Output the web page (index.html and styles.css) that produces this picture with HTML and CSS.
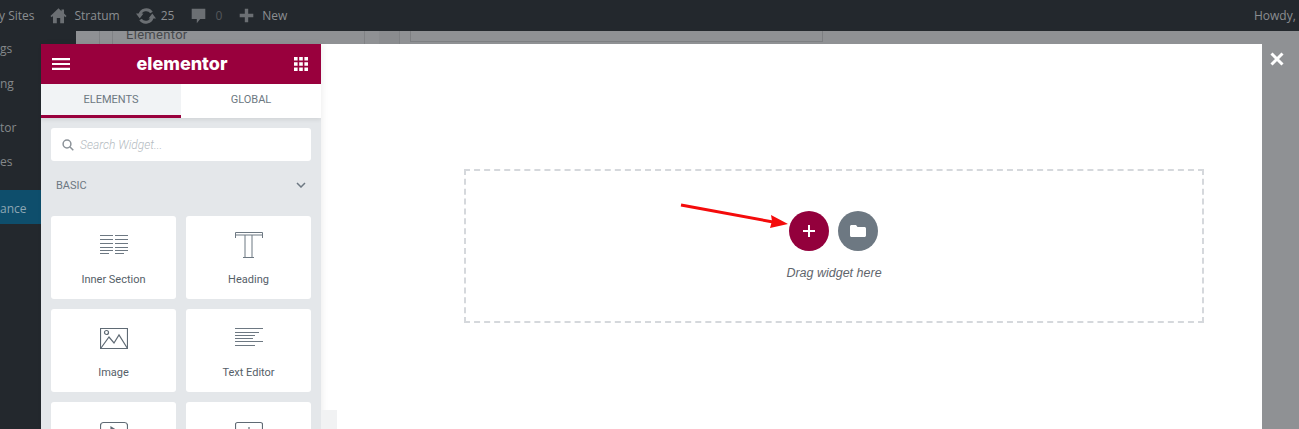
FILE: index.html
```html
<!DOCTYPE html>
<html lang="en">
<head>
  <meta charset="UTF-8" />
  <title>Elementor editor</title>
  <link rel="stylesheet" href="styles.css">
</head>
<body>

<div class="adminbar">
  <div class="bar-left">
    <span class="bar-item sites">y Sites</span>
    <span class="bar-item">
      <svg class="bar-icon" viewBox="0 0 20 20"><path d="M10 1.500 .5 10.500 2 12l1.500-1.300V19H8v-6h4v6h4.500v-8.300L18 12l1.500-1.500L16.500 7.700V3h-3v1.900z"/></svg>
      Stratum
    </span>
    <span class="bar-item tight">
      <svg class="bar-icon wide" viewBox="0 0 20 20"><path class="ring" d="M3.800 9A6.500 6.500 0 0 1 15.500 6.500M16.200 11A6.500 6.500 0 0 1 4.500 13.500"/><path d="M0 7.500h7.500L3.700 12.500zM20 12.500h-7.500l3.800-5z"/></svg>
      25
    </span>
    <span class="bar-item muted">
      <svg class="bar-icon" viewBox="0 0 20 20"><path d="M2 2h16v12h-6l-4 5v-5H2z"/></svg>
      0
    </span>
    <span class="bar-item">
      <svg class="bar-icon" viewBox="0 0 20 20"><path d="M8 2h4v6h6v4h-6v6H8v-6H2V8h6z"/></svg>
      New
    </span>
  </div>
  <span class="howdy">Howdy,</span>
</div>

<div class="stage">
  <div class="adminmenu">
    <div class="menu-item first">gs</div>
    <div class="menu-item second">ng</div>
    <div class="menu-item third">tor</div>
    <div class="menu-item fourth">es</div>
    <div class="menu-item current">ance</div>
  </div>

  <div class="backdrop">
    <div class="behind-title">Elementor</div>
    <span class="behind-line l1"></span>
    <span class="behind-line l2"></span>
    <span class="behind-line l3"></span>
    <span class="behind-line l4"></span>
    <span class="behind-line l5"></span>
    <span class="behind-box"></span>
  </div>

  <div class="editor">
    <div class="panel">
      <div class="panel-head">
        <svg class="head-icon" viewBox="0 0 18 12"><path d="M0 0h18v2.200H0zM0 4.900h18v2.200H0zM0 9.800h18V12H0z"/></svg>
        <span class="logo">elementor</span>
        <svg class="head-grid" viewBox="0 0 14 14"><path d="M0 0h3.600v3.600H0zM5.200 0h3.600v3.600H5.200zM10.400 0H14v3.600h-3.600zM0 5.200h3.600v3.600H0zM5.200 5.200h3.600v3.600H5.200zM10.400 5.200H14v3.600h-3.600zM0 10.400h3.600V14H0zM5.200 10.400h3.600V14H5.200zM10.400 10.400H14V14h-3.600z"/></svg>
      </div>

      <div class="tabs">
        <div class="tab active">ELEMENTS</div>
        <div class="tab">GLOBAL</div>
      </div>

      <div class="panel-body">
        <div class="search">
          <svg class="search-icon" viewBox="0 0 12 12"><circle cx="5" cy="5" r="3.900"/><path d="M8 8l3.300 3.300"/></svg>
          <span>Search Widget...</span>
        </div>

        <div class="group-title">
          <span>BASIC</span>
          <svg class="chevron" viewBox="0 0 10 6"><path d="M1 1l4 4 4-4"/></svg>
        </div>

        <div class="widgets">
          <div class="widget">
            <svg class="widget-icon" viewBox="0 0 28 28"><path d="M0 4.500h13M15 4.500h13M0 8.500h13M15 8.500h13M0 12.500h13M15 12.500h13M0 16.500h13M15 16.500h13M0 19.500h13M15 19.500h13M0 22.500h9M15 22.500h9"/></svg>
            <span>Inner Section</span>
          </div>
          <div class="widget">
            <svg class="widget-icon" viewBox="0 0 28 28"><path d="M.5 7V1.500h27V7M1 4h26M10 4v22M17 4v22M8 26.500h11"/></svg>
            <span>Heading</span>
          </div>
          <div class="widget">
            <svg class="widget-icon dark" viewBox="0 0 28 28"><path d="M.5 4.500h27v20H.5z"/><circle cx="6.500" cy="8.500" r="2"/><path d="M1 24l8-11 5 6 5-8 8.500 13.500"/></svg>
            <span>Image</span>
          </div>
          <div class="widget">
            <svg class="widget-icon" viewBox="0 0 28 28"><path d="M0 4.500h28M0 8.500h24M0 11.500h20M0 14.500h18M0 17.500h28M0 21.500h20"/></svg>
            <span>Text Editor</span>
          </div>
          <div class="widget">
            <svg class="widget-icon dark" viewBox="0 0 28 28"><rect x=".5" y="5.500" width="27" height="22" rx="3"/><path d="M11 10v9l7-4.500z"/></svg>
          </div>
          <div class="widget">
            <svg class="widget-icon dark" viewBox="0 0 28 28"><rect x=".5" y="5.500" width="27" height="22" rx="2"/><path d="M14 10v5"/></svg>
          </div>
        </div>
      </div>
    </div>

    <div class="preview">
      <div class="drop-area">
        <div class="drop-buttons">
          <div class="round-btn add">
            <svg viewBox="0 0 12 12"><path d="M6 0v12M0 6h12"/></svg>
          </div>
          <div class="round-btn template">
            <svg viewBox="0 0 16 12"><path d="M1.500 0h4.500l1.500 2h7c.8 0 1.500.7 1.500 1.500v7c0 .8-.7 1.500-1.500 1.500h-13C.7 12 0 11.300 0 10.500v-9C0 .7.700 0 1.500 0z"/></svg>
          </div>
        </div>
        <div class="drop-text">Drag widget here</div>
      </div>
    </div>
  </div>

  <svg class="close" viewBox="0 0 14 14"><path d="M1.500 1.500l11 11M12.500 1.500l-11 11"/></svg>

  <svg class="arrow" viewBox="0 0 110 32"><path class="arrow-line" d="M1 2l92 17"/><path class="arrow-head" d="M108 21 90 25l2-7-1-6z"/></svg>

  <div class="panel-tab"></div>
</div>

</body>
</html>
```

FILE: styles.css
```css
* {
  box-sizing: border-box;
}
html, body {
  height: 100%;
}
body {
  margin: 0;
  background: #23282d;
  overflow: hidden;
  display: flex;
  flex-direction: column;
  font-family: Roboto, sans-serif;
}

/* admin bar */
.adminbar {
  height: 31px;
  flex: none;
  background: #23282d;
  color: #8b8e91;
  font-family: "Open Sans", sans-serif;
  font-size: 12px;
  display: flex;
  align-items: center;
  justify-content: space-between;
}
.bar-left {
  display: flex;
  align-items: center;
  gap: 16px;
}
.bar-item {
  display: flex;
  align-items: center;
  gap: 7px;
}
.bar-item.sites {
  margin-left: -1px;
}
.bar-item.tight {
  gap: 5px;
}
.bar-item.muted {
  color: #53575b;
  gap: 8px;
}
.bar-icon {
  width: 17px;
  height: 17px;
  fill: #6b6f73;
}
.bar-icon.wide {
  width: 20px;
  height: 20px;
}
.bar-icon .ring {
  fill: none;
  stroke: #6b6f73;
  stroke-width: 3;
}
.howdy {
  width: 45px;
  white-space: nowrap;
  overflow: hidden;
}

/* everything under the bar */
.stage {
  position: relative;
  flex: 1;
  min-height: 0;
  overflow: hidden;
}
.adminmenu {
  width: 76px;
  height: 100%;
  color: #85888b;
  font-family: "Open Sans", sans-serif;
  font-size: 12px;
  line-height: 18px;
}
.menu-item {
  width: 41px;
}
.menu-item.first {
  padding-top: 9px;
}
.menu-item.second {
  padding-top: 17px;
}
.menu-item.third {
  padding-top: 26px;
}
.menu-item.fourth {
  padding-top: 16px;
}
.menu-item.current {
  margin-top: 19px;
  height: 34px;
  line-height: 38px;
  background: #0e4e6c;
  color: #8da6b3;
}
.backdrop {
  position: absolute;
  left: 76px;
  right: 0;
  top: 0;
  bottom: 0;
  background: #8f9194;
}
.behind-title {
  position: absolute;
  left: 50px;
  top: -4px;
  font-size: 13px;
  letter-spacing: 0.3px;
  color: #45484b;
}
.behind-line {
  position: absolute;
  top: 0;
  width: 1px;
  height: 13px;
  background: #808285;
}
.l1 { left: 23px; }
.l2 { left: 36px; }
.l3 { left: 288px; }
.l4 { left: 303px; width: 20px; background: #8a8c8f; }
.l5 { left: 323px; }
.behind-box {
  position: absolute;
  left: 334px;
  top: 0;
  width: 413px;
  height: 11px;
  border: 1px solid #7d7f82;
  border-top: none;
}

/* editor window */
.editor {
  position: absolute;
  left: 41px;
  right: 37px;
  top: 13px;
  bottom: 0;
  background: #fff;
  display: flex;
}
.panel {
  width: 280px;
  flex: none;
  background: #e4e7ea;
  box-shadow: 2px 0 6px rgba(0,0,0,0.06);
  display: flex;
  flex-direction: column;
  overflow: hidden;
}
.panel-head {
  height: 40px;
  flex: none;
  background: #99003d;
  padding: 0 13px 0 11px;
  display: flex;
  align-items: center;
  justify-content: space-between;
}
.head-icon {
  width: 18px;
  height: 12px;
  fill: #fff;
}
.head-grid {
  width: 14px;
  height: 14px;
  fill: #fff;
}
.logo {
  color: #fff;
  font-family: Inter, sans-serif;
  font-weight: 800;
  font-size: 18px;
  margin-bottom: 2px;
}
.tabs {
  height: 34px;
  flex: none;
  display: flex;
  background: #fff;
  box-shadow: 0 2px 4px rgba(0,0,0,0.08);
}
.tab {
  flex: 1;
  text-align: center;
  font-size: 11px;
  line-height: 31px;
  color: #6d7882;
}
.tab.active {
  background: #f1f3f5;
  border-bottom: 3px solid #99003d;
}
.panel-body {
  padding: 10px;
  flex: 1;
}
.search {
  height: 33px;
  background: #fff;
  border-radius: 3px;
  padding-left: 11px;
  display: flex;
  align-items: center;
  gap: 6px;
  font-size: 12px;
  font-style: italic;
  font-weight: 300;
  color: #b4bbc1;
}
.search-icon {
  width: 12px;
  height: 12px;
  fill: none;
  stroke: #8b9298;
  stroke-width: 1.500;
}
.group-title {
  height: 48px;
  padding: 0 5px 0 5px;
  display: flex;
  align-items: center;
  justify-content: space-between;
  font-size: 11px;
  color: #6d7882;
}
.chevron {
  width: 10px;
  height: 6px;
  fill: none;
  stroke: #6d7882;
  stroke-width: 1.500;
}
.widgets {
  margin-top: 7px;
  display: grid;
  grid-template-columns: 125px 125px;
  grid-auto-rows: 83px;
  gap: 10px;
}
.widget {
  background: #fff;
  border-radius: 3px;
  display: flex;
  flex-direction: column;
  align-items: center;
  padding-top: 15px;
  gap: 14px;
  font-size: 11px;
  color: #556068;
}
.widget-icon {
  width: 28px;
  height: 28px;
  flex: none;
  fill: none;
  stroke: #6d7882;
  stroke-width: 1;
}
.widget-icon.dark {
  stroke: #5f6a74;
  stroke-width: 1.200;
}
.preview {
  flex: 1;
  padding: 125px 58px 0 143px;
}
.drop-area {
  height: 154px;
  border: 2px dashed #d5d8dc;
  padding-top: 40px;
  display: flex;
  flex-direction: column;
  align-items: center;
  gap: 15px;
}
.drop-buttons {
  display: flex;
  gap: 9px;
  margin-right: 1px;
}
.round-btn {
  width: 40px;
  height: 40px;
  border-radius: 50%;
  display: flex;
  align-items: center;
  justify-content: center;
}
.round-btn.add {
  background: #93003c;
}
.round-btn.add svg {
  width: 12px;
  height: 12px;
  fill: none;
  stroke: #fff;
  stroke-width: 2;
}
.round-btn.template {
  background: #6d7882;
}
.round-btn.template svg {
  width: 16px;
  height: 12px;
  fill: #fff;
}
.drop-text {
  font-family: "Liberation Sans", sans-serif;
  font-style: italic;
  font-size: 12.500px;
  color: #5f666d;
}

/* things on top of the editor */
.close {
  position: absolute;
  left: 1270px;
  top: 21px;
  width: 14px;
  height: 14px;
  fill: none;
  stroke: #fff;
  stroke-width: 3;
}
.arrow {
  position: absolute;
  left: 680px;
  top: 172px;
  width: 110px;
  height: 32px;
}
.arrow-line {
  fill: none;
  stroke: #f40b0b;
  stroke-width: 3;
}
.arrow-head {
  fill: #f40b0b;
}
.panel-tab {
  position: absolute;
  left: 321px;
  top: 379px;
  width: 16px;
  height: 19px;
  background: #f1f2f3;
}
```
